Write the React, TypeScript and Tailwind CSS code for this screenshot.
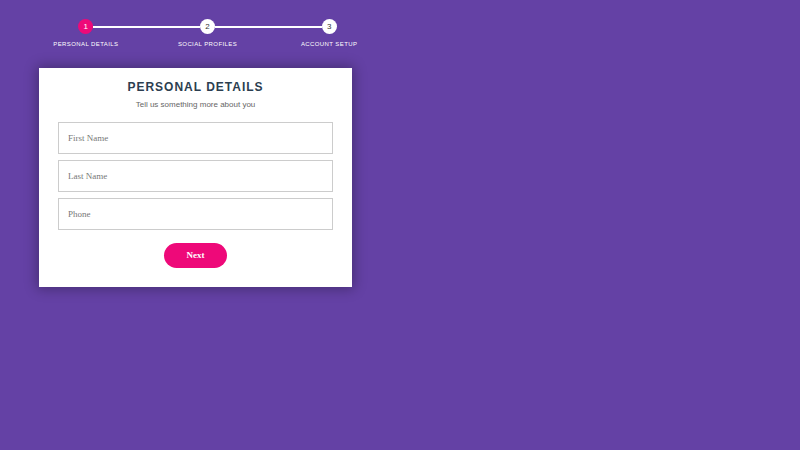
import React from "react";

const steps = ["Personal Details", "Social Profiles", "Account Setup"];

export default function App() {
  return (
    <div className="min-h-screen w-full bg-[#6441a5] overflow-hidden" style={{ fontFamily: "Arial, 'Liberation Sans', sans-serif" }}>
      <div className="w-[365px] ml-[25px] pt-[19px] grid grid-cols-3">
        {steps.map((s, i) => (
          <div key={s} className="flex flex-col items-center">
            <div className="flex items-center w-full">
              <div className={"flex-1 h-[2px] " + (i === 0 ? "bg-transparent" : "bg-white")} />
              <div
                className={
                  "w-[15px] h-[15px] rounded-full flex items-center justify-center text-[8px] leading-none " +
                  (i === 0 ? "bg-[#ee0979] text-white" : "bg-white text-[#333]")
                }
              >
                {i + 1}
              </div>
              <div className={"flex-1 h-[2px] " + (i === 2 ? "bg-transparent" : "bg-white")} />
            </div>
            <div className="mt-[7px] text-[6px] leading-none uppercase tracking-[0.4px] text-white">{s}</div>
          </div>
        ))}
      </div>

      <div className="mt-[21px] ml-[39px] w-[313px] bg-white px-[19px] pt-[12px] pb-[19px] shadow-[0_0_12px_2px_rgba(0,0,0,0.3)]">
        <h2 className="text-center text-[12px] font-bold uppercase tracking-[1px] text-[#2c3e50] leading-[14px]">
          Personal Details
        </h2>
        <h3 className="text-center text-[8px] text-[#666] mt-[6px] leading-[10px]">Tell us something more about you</h3>

        <div className="mt-[12px] flex flex-col gap-[6px]">
          {["First Name", "Last Name", "Phone"].map((p) => (
            <input
              key={p}
              placeholder={p}
              className="w-full h-[32px] border border-[#ccc] px-[9px] text-[9px] outline-none placeholder:text-[#777] text-[#2c3e50]"
              style={{ fontFamily: "'Liberation Serif', serif" }}
            />
          ))}
        </div>

        <div className="flex justify-center mt-[13px]">
          <button
            className="w-[63px] h-[25px] rounded-full bg-[#ee0979] text-white text-[9px] font-bold"
            style={{ fontFamily: "'Liberation Serif', serif" }}
          >
            Next
          </button>
        </div>
      </div>
    </div>
  );
}
